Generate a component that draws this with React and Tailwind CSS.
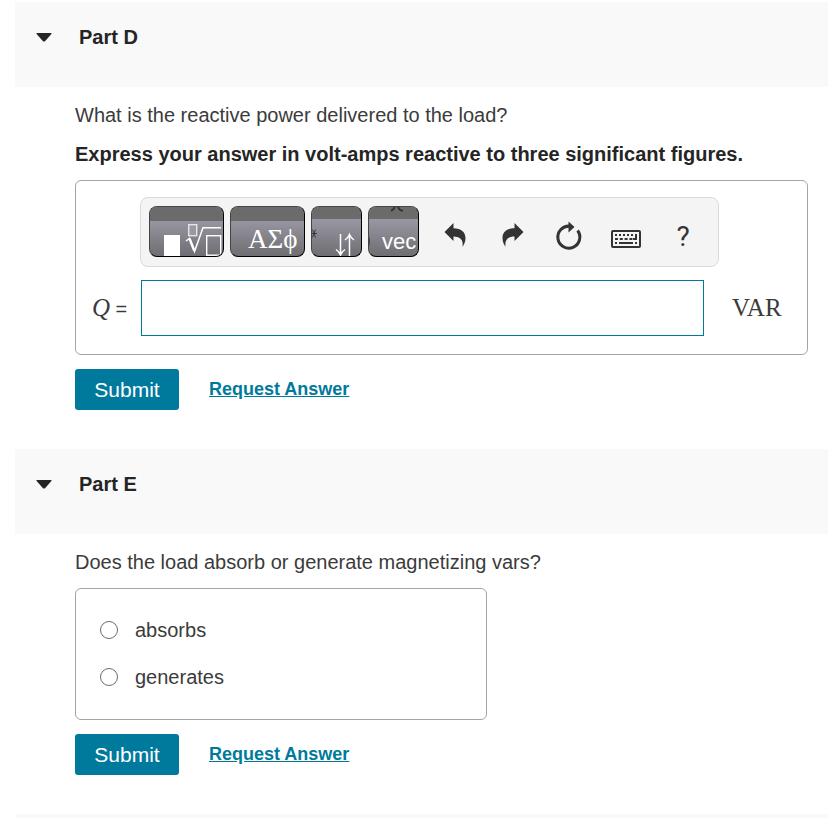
import { useState } from "react";

function App() {
  return (
    <div className="min-h-screen bg-white pl-[15px] pt-0.5 font-['Liberation_Sans',Arial,sans-serif] text-[#3b3b3b]">
      <Part title="Part D">
        <p className="text-[20px] leading-6">What is the reactive power delivered to the load?</p>
        <p className="mt-[15px] text-[20px] leading-6 font-bold text-[#252525]">
          Express your answer in volt-amps reactive to three significant figures.
        </p>
        <AnswerBox />
        <Actions />
      </Part>
      <Part title="Part E">
        <p className="text-[20px] leading-6">Does the load absorb or generate magnetizing vars?</p>
        <Choices name="vars" options={["absorbs", "generates"]} />
        <Actions />
      </Part>
      <div className="h-1 bg-[#f9f9f9]"></div>
    </div>
  );
}

function Part({ title, children }) {
  const [open, setOpen] = useState(true);

  return (
    <section>
      <h2 className="h-[85px] bg-[#f9f9f9] pl-5 pt-[23px]">
        <button
          type="button"
          aria-expanded={open}
          onClick={() => setOpen(!open)}
          className="flex items-center gap-[26px] text-[20px] leading-6 font-bold text-[#252525]"
        >
          <svg className="h-[9px] w-[18px]" viewBox="0 0 18 9" fill="currentColor">
            <path d="M2 0H16Q17 0.2 16.4 1L10 8.2Q9 9 8 8.2L1.6 1Q1 0.2 2 0Z" />
          </svg>
          {title}
        </button>
      </h2>
      {open && <div className="pb-[39px] pl-[60px] pr-5 pt-4">{children}</div>}
    </section>
  );
}

function AnswerBox() {
  return (
    <div className="mt-[14px] rounded-md border border-[#a5a5a5] px-4 pb-[18px] pt-4">
      <div className="ml-12 mr-[72px] flex h-[70px] items-start rounded-lg border border-[#d9d9d9] bg-[#f4f4f4] pl-2 pt-2">
        <div className="flex gap-1.5">
          <ToolKey label="Templates" wide>
            <rect x="14" y="28" width="16" height="21" fill="#fff" />
            <rect x="38.7" y="17.7" width="8" height="11" fill="#9a98a3" stroke="#e6e6e6" strokeWidth="1.4" />
            <path d="M36 34L39.5 31.5L44.5 44.5L53 20.7H71" fill="none" stroke="#fff" strokeWidth="1.5" />
            <path d="M39.5 31.5L44.2 43.5" stroke="#fff" strokeWidth="2.4" />
            <rect x="56.7" y="28.7" width="14" height="19.5" fill="none" stroke="#fff" strokeWidth="1.4" />
          </ToolKey>
          <ToolKey label="Symbols" wide>
            <text x="17" y="41" fontSize="27" fill="#fff" fontFamily="Liberation Serif, serif">
              ΑΣϕ
            </text>
          </ToolKey>
          <ToolKey label="Relations and arrows">
            <path d="M-1 26.5H5M0.5 22.5L3.5 30.5M3.5 22.5L0.5 30.5" stroke="#333" strokeWidth="0.9" />
            <path
              d="M28.5 27V48M24 42.5Q27 44.5 28.5 48Q30 44.5 33 42.5M37.5 49V27.5M33 33Q36 31 37.5 27.5Q39 31 42 33"
              fill="none"
              stroke="#fff"
              strokeWidth="1.5"
            />
          </ToolKey>
          <ToolKey label="Accents and vectors">
            <path d="M22 3.5Q25 3 26 -1M29 -1Q30 4 34 3.5" fill="none" stroke="#333" strokeWidth="1.8" />
            <path d="M-0.5 29.5Q1.5 34.5 -0.5 39.5" fill="none" stroke="#444" strokeWidth="1.2" />
            <text x="13" y="42" fontSize="22" fill="#fff" fontFamily="Liberation Sans, sans-serif">
              vec
            </text>
          </ToolKey>
        </div>
        <div className="ml-4 mt-[11px] flex gap-[17px] text-[#333]">
          <IconButton label="Undo">
            <path d="M9.5 15L18.5 6V11.2C26 11.2 30.5 15 30.5 21C30.5 25 29 27.5 27.5 30C28.5 23 25.5 19.5 18.5 19.5V24Z" />
          </IconButton>
          <IconButton label="Redo">
            <path d="M31.5 15L22.5 6V11.2C15 11.2 10.5 15 10.5 21C10.5 25 12 27.5 13.5 30C12.5 23 15.5 19.5 22.5 19.5V24Z" />
          </IconButton>
          <IconButton label="Reset">
            <path d="M21 9.2A11 11 0 1 0 28.6 13.5" fill="none" stroke="currentColor" strokeWidth="3" />
            <path d="M19.5 4.5L25.5 10L19.5 15.5Z" />
          </IconButton>
          <IconButton label="Keyboard shortcuts">
            <rect x="6" y="14" width="28" height="16" rx="1" fill="none" stroke="currentColor" strokeWidth="2" />
            <path d="M9 18H31" fill="none" stroke="currentColor" strokeWidth="2" strokeDasharray="2 2" />
            <path d="M9 22H27" fill="none" stroke="currentColor" strokeWidth="2" strokeDasharray="3 1.8" />
            <path d="M9 26H11M13 26H27M29 26H31M30 17V22H27" fill="none" stroke="currentColor" strokeWidth="2" />
          </IconButton>
          <button type="button" aria-label="Help" className="size-10 font-['Roboto',sans-serif] text-[28px] leading-10">
            ?
          </button>
        </div>
      </div>
      <div className="mt-[13px] flex items-center">
        <label htmlFor="reactive-power" className="w-[49px] shrink-0 text-[20px]">
          <i className="font-['Liberation_Serif',serif] text-[25px]">Q</i> =
        </label>
        <input id="reactive-power" type="text" className="h-14 min-w-0 flex-1 border border-[#007a9c] px-3 text-[20px] outline-none" />
        <span className="ml-7 w-[59px] font-['Liberation_Serif',serif] text-[25px]">VAR</span>
      </div>
    </div>
  );
}

function ToolKey({ label, wide, children }) {
  return (
    <button
      type="button"
      aria-label={label}
      className={`h-[51px] overflow-hidden rounded-lg border border-[#444] border-b-black border-r-black bg-linear-to-b from-[#9997a2] from-25% to-[#6f6e72] ${wide ? "w-[75px]" : "w-[51px]"}`}
    >
      <svg className="h-[49px] w-full" viewBox={wide ? "0 0 73 49" : "0 0 49 49"}>
        <rect width="75" height={wide ? 14 : 12} fill="#6b6b6b" />
        {children}
      </svg>
    </button>
  );
}

function IconButton({ label, children }) {
  return (
    <button type="button" aria-label={label} className="size-10">
      <svg className="size-10" viewBox="0 0 40 40" fill="currentColor">
        {children}
      </svg>
    </button>
  );
}

function Choices({ name, options }) {
  const [selected, setSelected] = useState("");

  return (
    <fieldset className="mt-[14px] flex w-[412px] max-w-full flex-col gap-[23px] rounded-md border border-[#a5a5a5] px-6 pb-[30px] pt-[29px]">
      {options.map((option) => (
        <label key={option} className="flex items-center gap-[17px] text-[20px] leading-6">
          <input
            type="radio"
            name={name}
            value={option}
            checked={selected === option}
            onChange={() => setSelected(option)}
            className="size-[18px] appearance-none rounded-full border border-[#6b6b6b] bg-white checked:border-[6px] checked:border-[#007a9c]"
          />
          {option}
        </label>
      ))}
    </fieldset>
  );
}

function Actions() {
  return (
    <div className="mt-[14px] flex items-center gap-[30px]">
      <button type="button" className="h-[41px] w-[104px] rounded-[3px] bg-[#007a9c] text-[21px] text-white">
        Submit
      </button>
      <a href="#request" className="text-[18px] font-bold text-[#007a9c] underline">
        Request Answer
      </a>
    </div>
  );
}

export default App;
